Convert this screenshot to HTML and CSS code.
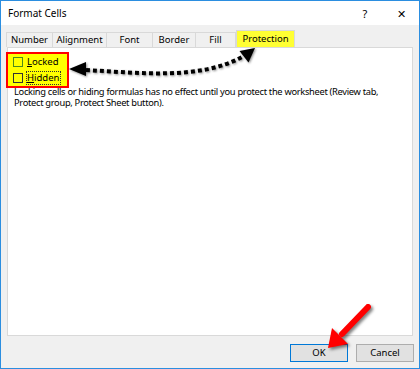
FILE: index.html
```html
<!DOCTYPE html>
<html lang="en">
<head>
    <meta charset="UTF-8">
    <title>Format Cells</title>
    <link rel="stylesheet" href="styles.css">
</head>
<body>
    <div class="window">
        <div class="titlebar">
            <span class="title">Format Cells</span>
            <span class="help">?</span>
            <span class="close">&#x2715;</span>
        </div>

        <div class="content">
            <div class="tabs">
                <div class="tab tab-number">Number</div>
                <div class="tab tab-align">Alignment</div>
                <div class="tab tab-font">Font</div>
                <div class="tab tab-border">Border</div>
                <div class="tab tab-fill">Fill</div>
                <div class="tab tab-protect active">Protection</div>
            </div>

            <div class="panel">
                <div class="highlight">
                    <div class="check-row">
                        <span class="box box-green"></span>
                        <span class="label"><u>L</u>ocked</span>
                    </div>
                    <div class="check-row">
                        <span class="box"></span>
                        <span class="label focus"><u>H</u>idden</span>
                    </div>
                </div>
                <p class="note">Locking cells or hiding formulas has no effect until you protect the worksheet (Review tab,<br>Protect group, Protect Sheet button).</p>
            </div>

            <div class="buttons">
                <div class="button default">OK</div>
                <div class="button">Cancel</div>
            </div>
        </div>

        <!-- annotation arrows drawn over the dialog -->
        <svg class="arrows" width="420" height="369" viewBox="0 0 420 369">
            <g class="dotted">
                <path d="M86 70 C 140 73, 200 80, 242 57" fill="none" stroke="#000" stroke-width="4" stroke-dasharray="4 3"/>
                <polygon points="69,69 86,62 86,76" fill="#000"/>
                <polygon points="255,48 248.5,62.5 239.5,51" fill="#000"/>
            </g>
            <g class="red">
                <line x1="368" y1="307" x2="342" y2="334" stroke="#f00" stroke-width="6" stroke-linecap="round"/>
                <polygon points="328,348 348,344 332,328" fill="#f00"/>
            </g>
        </svg>
    </div>
</body>
</html>
```

FILE: styles.css
```css
body {
    margin: 0;
    font-family: "Segoe UI", "Noto Sans", sans-serif;
    font-size: 9.5px;
    color: #000;
}
.window {
    position: relative;
    width: 420px;
    height: 369px;
    box-sizing: border-box;
    border: 1px solid #2b8ee0;
    background: #f0f0f0;
}
.titlebar {
    height: 24px;
    background: #fff;
    display: flex;
    align-items: center;
    padding-left: 7px;
    font-size: 10px;
}
.title {
    flex: 1;
}
.help {
    width: 12px;
    text-align: center;
    margin-right: 24px;
    font-size: 11px;
}
.close {
    width: 12px;
    text-align: center;
    margin-right: 12px;
    font-size: 11px;
}
.content {
    padding: 5px 5px 0 5px;
}
.tabs {
    display: flex;
    align-items: flex-end;
    height: 17px;
}
.tab {
    height: 15px;
    line-height: 14px;
    box-sizing: border-box;
    border: 1px solid #d9d9d9;
    border-bottom: none;
    border-right: none;
    text-align: center;
}
.tab-number { width: 46px; }
.tab-align { width: 54px; }
.tab-font { width: 46px; }
.tab-border { width: 43px; }
.tab-fill { width: 41px; border-right: 1px solid #d9d9d9; }
.tab.active {
    height: 17px;
    line-height: 16px;
    width: 59px;
    background: #ffff33;
    border: 1px solid #d9d9d9;
    border-bottom: none;
}
.panel {
    width: 406px;
    height: 289px;
    box-sizing: border-box;
    margin-left: 1px;
    background: #fff;
    border: 1px solid #d9d9d9;
}
.highlight {
    width: 63px;
    height: 36px;
    box-sizing: border-box;
    margin: 4px 0 0 -2px;
    padding: 1px 0 0 5px;
    background: #ffff00;
    border: 2px solid #f00;
}
.check-row {
    display: flex;
    align-items: center;
    height: 14px;
    margin-bottom: 2px;
}
.box {
    width: 10px;
    height: 10px;
    box-sizing: border-box;
    border: 1px solid #333;
    margin-right: 4px;
}
.box-green {
    border-color: #4d8a1c;
}
.label {
    line-height: 12px;
}
.label.focus {
    border: 1px dotted #333;
    margin-left: -1px;
    padding: 0 1px 0 0;
}
.note {
    margin: -1px 0 0 6px;
    font-size: 9.3px;
    line-height: 10.5px;
    letter-spacing: -0.3px;
    white-space: nowrap;
}
.buttons {
    display: flex;
    justify-content: flex-end;
    gap: 8px;
    margin-top: 8px;
}
.button {
    width: 58px;
    height: 18px;
    box-sizing: border-box;
    border: 1px solid #adadad;
    background: #e1e1e1;
    text-align: center;
    line-height: 16px;
}
.button.default {
    border-color: #0078d7;
}
.arrows {
    position: absolute;
    left: -1px;
    top: -1px;
    pointer-events: none;
}
.arrows .dotted {
    filter: drop-shadow(1px 1px 1px rgba(0, 0, 0, 0.45));
}
.arrows .red {
    filter: drop-shadow(2px 2px 1.5px rgba(0, 0, 0, 0.5));
}
```
